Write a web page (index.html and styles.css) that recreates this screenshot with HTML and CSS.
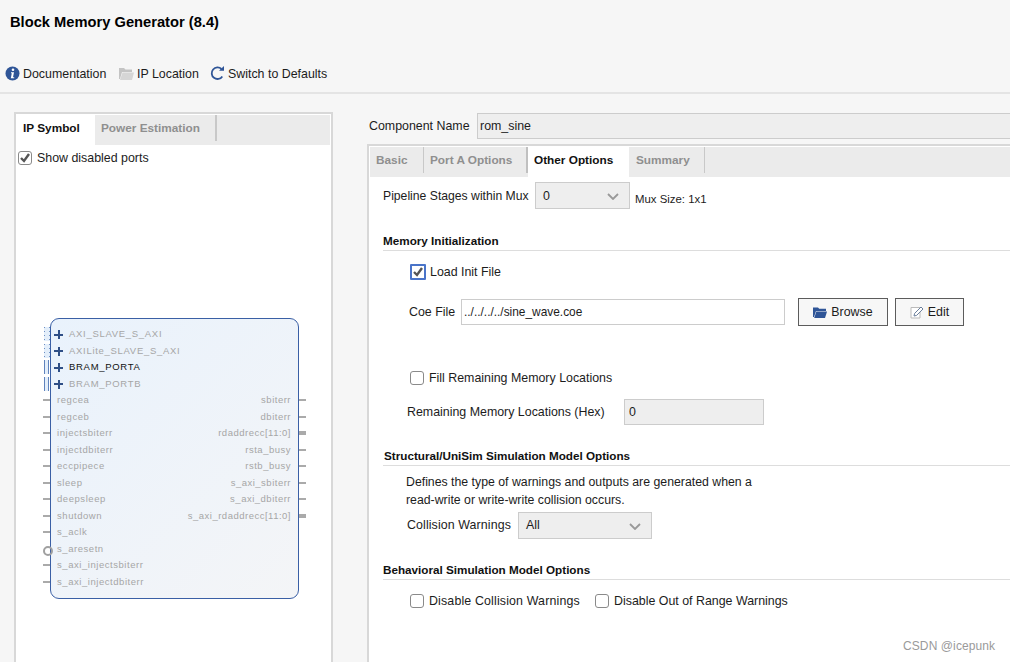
FILE: index.html
```html
<!DOCTYPE html>
<html lang="en">
<head>
<meta charset="utf-8">
<title>Block Memory Generator</title>
<link rel="stylesheet" href="styles.css">
</head>
<body>
<div class="app">
  <header class="title-bar">Block Memory Generator (8.4)</header>
  <nav class="toolbar">
    <span class="tool tool-doc">
      <svg class="ico" width="15" height="15" viewBox="0 0 15 15"><circle cx="7.5" cy="7.5" r="7" fill="#2f5597"/><circle cx="8" cy="3.8" r="1.3" fill="#fff"/><path d="M6 6.3h3l-1 5h1.2v1H5.8l1-5H6z" fill="#fff"/></svg>
      Documentation</span>
    <span class="tool tool-loc">
      <svg class="ico" width="15" height="13" viewBox="0 0 15 13"><path d="M0 1h5l1.500 1.500H13V5H3L1 12H0z" fill="#c4c4c4"/><path d="M3.500 5.500H15L13 13H1z" fill="#d6d6d6"/></svg>
      IP Location</span>
    <span class="tool tool-def">
      <svg class="ico" width="15" height="15" viewBox="0 0 15 15"><path d="M12.300 10.500A5.800 5.800 0 1 1 11.500 3" fill="none" stroke="#2f5597" stroke-width="1.800"/><path d="M9 4.800h5V0z" fill="#2f5597"/></svg>
      Switch to Defaults</span>
  </nav>
  <main class="workspace">
    <section class="left-panel">
      <div class="tabs">
        <span class="tab tab-on tab-sym">IP Symbol</span>
        <span class="tab tab-pow">Power Estimation</span>
      </div>
      <label class="show-ports">
        <span class="check check-on"><svg width="12" height="12" viewBox="0 0 12 12"><path d="M2 6l3 3 5-7" fill="none" stroke="#555" stroke-width="2.400"/></svg></span>
        Show disabled ports
      </label>
      <div class="symbol">
        <div class="col col-left">
          <div class="port bus off"><i class="dots"></i><b class="plus"></b>AXI_SLAVE_S_AXI</div>
          <div class="port bus off"><i class="dots"></i><b class="plus"></b>AXILite_SLAVE_S_AXI</div>
          <div class="port bus on"><i class="dbl"></i><b class="plus"></b>BRAM_PORTA</div>
          <div class="port bus off"><i class="dbl"></i><b class="plus"></b>BRAM_PORTB</div>
          <div class="port sig">regcea</div>
          <div class="port sig">regceb</div>
          <div class="port sig">injectsbiterr</div>
          <div class="port sig">injectdbiterr</div>
          <div class="port sig">eccpipece</div>
          <div class="port sig">sleep</div>
          <div class="port sig">deepsleep</div>
          <div class="port sig">shutdown</div>
          <div class="port sig">s_aclk</div>
          <div class="port sig rst">s_aresetn</div>
          <div class="port sig">s_axi_injectsbiterr</div>
          <div class="port sig">s_axi_injectdbiterr</div>
        </div>
        <div class="col col-right">
          <div class="port out">sbiterr</div>
          <div class="port out">dbiterr</div>
          <div class="port out wide">rdaddrecc[11:0]</div>
          <div class="port out">rsta_busy</div>
          <div class="port out">rstb_busy</div>
          <div class="port out">s_axi_sbiterr</div>
          <div class="port out">s_axi_dbiterr</div>
          <div class="port out wide">s_axi_rdaddrecc[11:0]</div>
        </div>
      </div>
    </section>
    <section class="right-panel">
      <div class="name-row">
        <span class="name-label">Component Name</span>
        <span class="field name-field">rom_sine</span>
      </div>
      <div class="options">
        <div class="tabs tabs-right">
          <span class="tab t-basic">Basic</span>
          <span class="tab t-porta">Port A Options</span>
          <span class="tab tab-on t-other">Other Options</span>
          <span class="tab t-sum">Summary</span>
        </div>
        <div class="body">
          <div class="row pipe-row">
            <span class="pipe-label">Pipeline Stages within Mux</span>
            <span class="select sel-pipe">0<svg class="chev" width="12" height="7" viewBox="0 0 12 7"><path d="M1 1l5 5 5-5" fill="none" stroke="#999" stroke-width="1.800"/></svg></span>
            <span class="mux">Mux Size: 1x1</span>
          </div>
          <h3 class="group g-mem">Memory Initialization</h3>
          <label class="row load-row">
            <span class="check check-on check-focus"><svg width="12" height="12" viewBox="0 0 12 12"><path d="M2 6l3 3 5-7" fill="none" stroke="#555" stroke-width="2.400"/></svg></span>
            Load Init File
          </label>
          <div class="row coe-row">
            <span class="coe-label">Coe File</span>
            <span class="field coe-field">../../../../sine_wave.coe</span>
            <span class="btn btn-browse">
              <svg width="14" height="12" viewBox="0 0 14 12"><path d="M0 1.500h5l1.200 1.300H13V5H3L1 11H0z" fill="#2f5597"/><path d="M3.300 5.500H14L12 12H1.200z" fill="#2f5597"/></svg>
              Browse</span>
            <span class="btn btn-edit">
              <svg width="14" height="14" viewBox="0 0 14 14"><path d="M1 2.500h9v10.500H1z" fill="#fff" stroke="#bbb"/><path d="M4 11l.6-2.600L11 2l2 2-6.400 6.400z" fill="#fff" stroke="#6b7f9c"/></svg>
              Edit</span>
          </div>
          <label class="row fill-row"><span class="check"></span>Fill Remaining Memory Locations</label>
          <div class="row rem-row">
            <span class="rem-label">Remaining Memory Locations (Hex)</span>
            <span class="field rem-field">0</span>
          </div>
          <h3 class="group g-struct">Structural/UniSim Simulation Model Options</h3>
          <p class="desc">Defines the type of warnings and outputs are generated when a<br>read-write or write-write collision occurs.</p>
          <div class="row coll-row">
            <span class="coll-label">Collision Warnings</span>
            <span class="select sel-coll">All<svg class="chev" width="12" height="7" viewBox="0 0 12 7"><path d="M1 1l5 5 5-5" fill="none" stroke="#999" stroke-width="1.800"/></svg></span>
          </div>
          <h3 class="group g-beh">Behavioral Simulation Model Options</h3>
          <div class="row dis-row">
            <label class="dis dis-a"><span class="check"></span>Disable Collision Warnings</label>
            <label class="dis"><span class="check"></span>Disable Out of Range Warnings</label>
          </div>
        </div>
      </div>
    </section>
  </main>
  <div class="watermark">CSDN @icepunk</div>
</div>
</body>
</html>
```
FILE: styles.css
```css
* { box-sizing: border-box; }
html, body { margin: 0; height: 100%; overflow: hidden; }
body { background: #f6f6f6; font-family: "Liberation Sans", Arial, sans-serif; font-size: 12.4px; color: #1c1c1c; }
.app { position: relative; width: 1010px; height: 662px; overflow: hidden; }

.title-bar { height: 44px; padding: 14px 0 0 10px; font-size: 14.7px; line-height: 16px; font-weight: 700; color: #000; }
.toolbar { height: 50px; padding: 21px 0 0 5px; display: flex; border-bottom: 2px solid #e4e4e4; }
.tool { display: flex; align-items: center; height: 17px; }
.ico { margin-right: 3px; }
.tool-doc { width: 114px; }
.tool-loc { width: 91px; }

.workspace { display: flex; padding: 18px 0 0 14px; }
.left-panel { width: 319px; height: 560px; flex: none; background: #fff; border: 2px solid #d8d8d8; border-bottom: 0; padding: 1px 1px 0; }
.tabs { display: flex; height: 30px; background: #ebebeb; font-size: 11.8px; font-weight: 700; color: #8f8f8f; }
.tab { display: flex; align-items: center; height: 26px; }
.tab-on { height: 30px; padding-bottom: 4px; background: #fff; color: #111; }
.tab-sym { width: 78px; padding-left: 6px; }
.tab-pow { width: 122px; padding-left: 6px; border-right: 2px solid #c8c8c8; }

.show-ports { display: flex; align-items: center; gap: 5px; height: 14px; margin: 6px 0 0 1px; }
.check { flex: none; width: 14px; height: 14px; display: flex; align-items: center; justify-content: center; background: #fff; border: 1px solid #8a8a8a; border-radius: 3px; }
.check-focus { width: 16px; height: 16px; border: 2px solid #4a74c9; border-radius: 1px; }

.symbol { display: flex; justify-content: space-between; width: 249px; height: 281px; margin: 153px 0 0 33px; padding: 7px 7px 0 0; border: 1px solid #3a5fa5; border-radius: 9px; background: linear-gradient(135deg, #e9f2fc, #f4f5f7); font-size: 9.5px; letter-spacing: .55px; color: #a6a6a6; }
.col-right { padding-top: 66px; text-align: right; letter-spacing: .5px; }
.port { position: relative; height: 16.5px; line-height: 16.5px; white-space: nowrap; }
.sig { padding-left: 6px; }
.bus { padding-left: 18px; letter-spacing: .7px; }
.on { color: #111; }
.plus { position: absolute; left: 3px; top: 4px; width: 9px; height: 9px; background: linear-gradient(#2f4f86, #2f4f86) center / 9px 2px no-repeat, linear-gradient(#2f4f86, #2f4f86) center / 2px 9px no-repeat; }
.sig::before { content: ""; position: absolute; left: -8px; top: 7px; width: 7px; height: 2px; background: #aaa; }
.rst::before { left: -8px; top: 5px; width: 6px; height: 6px; background: transparent; border: 2px solid #a0a0a0; border-radius: 50%; }
.out::after { content: ""; position: absolute; right: -15px; top: 7px; width: 7px; height: 2px; background: #aaa; }
.wide::after { top: 6px; height: 4px; }
.dots { position: absolute; left: -7px; top: 1px; width: 6px; height: 14px; background: repeating-linear-gradient(#6d8fc4 0 1px, transparent 1px 4px) left / 1px 100% no-repeat, repeating-linear-gradient(#6d8fc4 0 1px, transparent 1px 4px) right / 1px 100% no-repeat, #e3eefa; }
.dbl { position: absolute; left: -7px; top: 1px; width: 5px; height: 14px; border-left: 1px solid #5f83bd; border-right: 1px solid #5f83bd; background: #e3eefa; }

.right-panel { width: 663px; flex: none; margin-left: 34px; }
.name-row { display: flex; align-items: center; height: 26px; padding-left: 2px; margin-top: 1px; }
.name-label { width: 108px; flex: none; }
.field { display: flex; align-items: center; flex: none; background: #fff; border: 1px solid #ccc; padding-left: 3px; }
.name-field { width: 540px; height: 26px; background: #eee; padding-left: 2px; }
.options { width: 650px; height: 520px; margin-top: 5px; border: 2px solid #d8d8d8; border-right: 0; border-bottom: 0; padding: 1px 0 0 1px; background: #fff; }
.tabs-right .tab { padding-left: 6px; }
.tabs-right .t-basic { width: 54px; border-right: 1px solid #c8c8c8; }
.tabs-right .t-porta { width: 104px; border-right: 2px solid #c0c0c0; }
.tabs-right .t-other { width: 101px; }
.tabs-right .t-sum { width: 76px; padding-left: 7px; border-right: 1px solid #c8c8c8; }

.body { position: relative; padding-left: 13px; }
.row { display: flex; align-items: center; }
.pipe-row { height: 27px; margin-top: 5px; }
.pipe-label { width: 152px; font-size: 12.2px; }
.select { position: relative; display: flex; align-items: center; height: 27px; padding-left: 7px; background: #eee; border: 1px solid #ccc; }
.sel-pipe { width: 95px; }
.chev { position: absolute; right: 10px; top: 10px; }
.mux { margin: 6px 0 0 5px; font-size: 11.4px; }
.group { margin: 0; padding-top: 1px; font-size: 11.7px; line-height: 16px; font-weight: 700; color: #111; border-bottom: 1px solid #ddd; }
.g-mem { height: 19px; margin-top: 23px; }
.load-row { gap: 4px; height: 16px; margin: 13px 0 0 27px; }
.coe-row { height: 28px; margin-top: 18px; padding-left: 26px; }
.coe-label { width: 52px; }
.coe-field { width: 324px; height: 26px; padding-left: 2px; font-size: 11.9px; }
.btn { display: flex; align-items: center; justify-content: center; gap: 4px; height: 28px; background: #f7f7f7; border: 1px solid #5c5c5c; }
.btn-browse { width: 90px; margin-left: 13px; }
.btn-edit { width: 69px; margin-left: 7px; }
.fill-row { gap: 5px; height: 14px; margin: 45px 0 0 27px; }
.rem-row { height: 26px; margin-top: 14px; padding-left: 24px; }
.rem-label { width: 217px; }
.rem-field { width: 140px; height: 26px; background: #eee; padding-left: 4px; }
.g-struct { height: 18px; margin-top: 23px; padding-top: 0; padding-left: 1px; }
.desc { margin: 7px 0 0 23px; line-height: 18px; font-size: 12.3px; }
.coll-row { height: 27px; margin-top: 3px; padding-left: 24px; }
.coll-label { width: 111px; letter-spacing: .1px; padding-bottom: 1px; }
.sel-coll { width: 134px; padding-bottom: 1px; }
.g-beh { height: 19px; margin-top: 22px; }
.dis-row { height: 14px; margin: 14px 0 0 27px; }
.dis { display: flex; align-items: center; gap: 5px; }
.dis-a { width: 185px; letter-spacing: .15px; }
.watermark { position: absolute; left: 903px; top: 638px; font-size: 12px; line-height: 16px; color: #9a9a9a; letter-spacing: .1px; }
```
